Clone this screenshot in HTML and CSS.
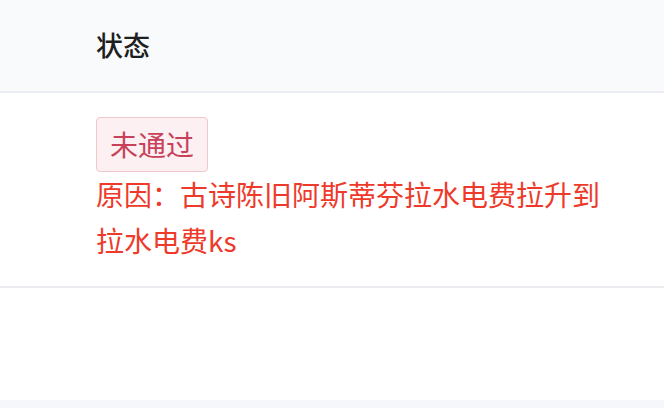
FILE: index.html
```html
<!DOCTYPE html>
<html lang="zh">
<head>
<meta charset="utf-8">
<link rel="stylesheet" href="styles.css">
</head>
<body>
<div class="table">
  <div class="thead">
    <div class="th">状态</div>
  </div>
  <div class="row">
    <div class="cell">
      <span class="badge">未通过</span>
      <div class="reason">原因：古诗陈旧阿斯蒂芬拉水电费拉升到拉水电费ks</div>
    </div>
  </div>
  <div class="empty"></div>
  <div class="footer"></div>
</div>
</body>
</html>
```
FILE: styles.css
```css
html, body {
  margin: 0;
  padding: 0;
  background: #ffffff;
}
body {
  font-family: "Noto Sans CJK SC", "Noto Sans", sans-serif;
  width: 664px;
  height: 408px;
  overflow: hidden;
}
.table {
  display: flex;
  flex-direction: column;
  height: 408px;
}
.thead {
  height: 91px;
  background: #f9fafc;
  border-bottom: 2px solid #ebedf3;
  display: flex;
  align-items: center;
  padding-left: 96px;
}
.th {
  font-size: 27px;
  color: #1f1f1f;
  font-weight: 500;
  line-height: 1;
  margin-top: -3px;
}
.row {
  border-bottom: 2px solid #ebedf0;
  padding: 24px 0 23px 96px;
}
.cell {
  width: 520px;
  display: flex;
  flex-direction: column;
  align-items: flex-start;
}
.badge {
  display: inline-block;
  box-sizing: border-box;
  height: 55px;
  padding: 0 13px;
  font-size: 28px;
  line-height: 53px;
  color: #c8415b;
  background: #fcf0f2;
  border: 1px solid #f1c6cf;
  border-radius: 4px;
}
.reason {
  font-size: 28px;
  line-height: 46px;
  color: #ee3a2b;
  margin-top: -1px;
}
.empty {
  flex: 1;
  background: #ffffff;
}
.footer {
  height: 8px;
  background: #f5f7fa;
}
```
